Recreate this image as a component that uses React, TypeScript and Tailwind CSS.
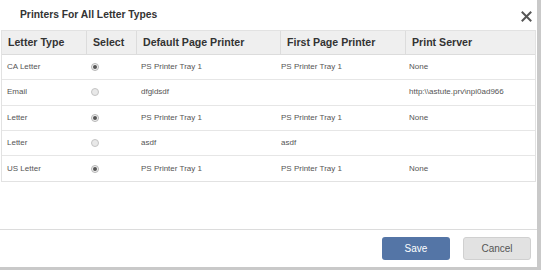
import React from 'react';

const rows = [
  { type: 'CA Letter', selected: true, def: 'PS Printer Tray 1', first: 'PS Printer Tray 1', server: 'None' },
  { type: 'Email', selected: false, def: 'dfgldsdf', first: '', server: 'http:\\\\astute.prv\\npi0ad966' },
  { type: 'Letter', selected: true, def: 'PS Printer Tray 1', first: 'PS Printer Tray 1', server: 'None' },
  { type: 'Letter', selected: false, def: 'asdf', first: 'asdf', server: '' },
  { type: 'US Letter', selected: true, def: 'PS Printer Tray 1', first: 'PS Printer Tray 1', server: 'None' },
];

const cols = ['w-[85px]', 'w-[50px]', 'w-[144px]', 'w-[125px]', 'flex-1'];

function Radio({ checked }: { checked: boolean }) {
  return checked ? (
    <span className="flex h-[8px] w-[8px] items-center justify-center rounded-full border border-[#b5b5b5] bg-[#f2f2f2]">
      <span className="h-[4px] w-[4px] rounded-full bg-[#555]" />
    </span>
  ) : (
    <span className="block h-[8px] w-[8px] rounded-full border border-[#c4c4c4] bg-[#e8e8e8]" />
  );
}

export default function App() {
  return (
    <div className="h-[270px] w-[541px] bg-[#c9c9c9]" style={{ fontFamily: '"Liberation Sans", Arial, sans-serif' }}>
      <div className="flex h-[267px] w-[537px] flex-col bg-white">
        {/* Title bar */}
        <div className="flex h-[30px] items-center justify-between pl-[20px] pr-[5px]">
          <h2 className="text-[10.3px] font-bold text-[#333]">Printers For All Letter Types</h2>
          <svg width="11" height="11" viewBox="0 0 11 11" className="mt-[2px]">
            <path d="M1.5 1.5 L9.5 9.5 M9.5 1.5 L1.5 9.5" stroke="#555" strokeWidth="2" strokeLinecap="square" />
          </svg>
        </div>

        {/* Table */}
        <div className="mx-[1px] h-[152px] border border-[#e2e2e2]">
          <div className="flex h-[24px] items-center border-b border-[#dcdcdc] bg-[#efefef] text-[10.6px] font-bold text-[#333]">
            {['Letter Type', 'Select', 'Default Page Printer', 'First Page Printer', 'Print Server'].map((h, i) => (
              <div
                key={h}
                className={`${cols[i]} flex h-full items-center pl-[6px] ${i < 4 ? 'border-r border-[#dcdcdc]' : ''}`}
              >
                {h}
              </div>
            ))}
          </div>
          {rows.map((r, idx) => (
            <div
              key={idx}
              className={`flex h-[25.3px] items-center text-[8px] text-[#555] ${idx < rows.length - 1 ? 'border-b border-[#e6e6e6]' : ''}`}
            >
              <div className={`${cols[0]} pl-[5px]`}>{r.type}</div>
              <div className={`${cols[1]} pl-[4px]`}>
                <Radio checked={r.selected} />
              </div>
              <div className={`${cols[2]} pl-[4px]`}>{r.def}</div>
              <div className={`${cols[3]} pl-[0px]`}>{r.first}</div>
              <div className={`${cols[4]} pl-[3px]`}>{r.server}</div>
            </div>
          ))}
        </div>

        <div className="flex-1" />

        {/* Footer */}
        <div className="flex h-[38px] items-center justify-end gap-[13px] border-t border-[#dcdcdc] pr-[6px]">
          <button className="h-[23px] w-[68px] rounded-[3px] bg-[#5475a6] text-[10px] text-white">Save</button>
          <button className="h-[23px] w-[68px] rounded-[3px] border border-[#d0d0d0] bg-[#e2e2e2] text-[10px] text-[#555]">
            Cancel
          </button>
        </div>
      </div>
    </div>
  );
}
